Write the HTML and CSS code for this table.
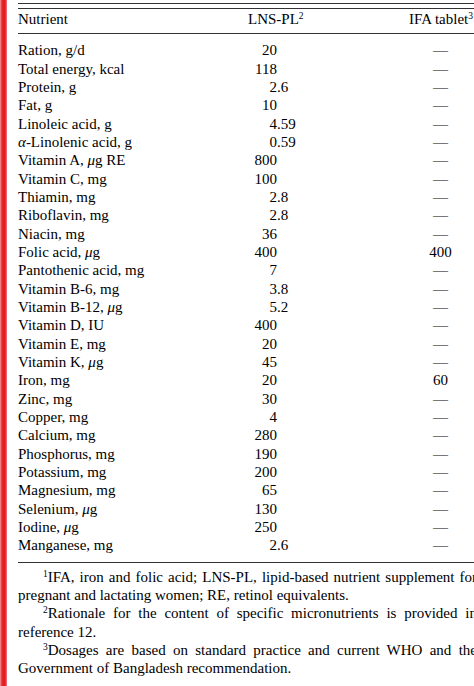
FILE: index.html
```html
<!DOCTYPE html>
<html lang="en">
<head>
<meta charset="utf-8">
<title>Nutrient composition</title>
<link rel="stylesheet" href="styles.css">
</head>
<body>
<div class="page">
  <div class="bar"></div>
  <div class="content">
    <div class="double-rule"></div>
    <div class="row head">
      <div class="name">Nutrient</div>
      <div class="lns">LNS-PL<sup>2</sup></div>
      <div class="ifa-head">IFA tablet<sup>3</sup></div>
    </div>
    <div class="body">
      <div class="row"><div class="name">Ration, g/d</div><div class="int">20</div><div class="frac"></div><div class="ifa">—</div></div>
      <div class="row"><div class="name">Total energy, kcal</div><div class="int">118</div><div class="frac"></div><div class="ifa">—</div></div>
      <div class="row"><div class="name">Protein, g</div><div class="int">2</div><div class="frac">.6</div><div class="ifa">—</div></div>
      <div class="row"><div class="name">Fat, g</div><div class="int">10</div><div class="frac"></div><div class="ifa">—</div></div>
      <div class="row"><div class="name">Linoleic acid, g</div><div class="int">4</div><div class="frac">.59</div><div class="ifa">—</div></div>
      <div class="row"><div class="name"><i>α</i>-Linolenic acid, g</div><div class="int">0</div><div class="frac">.59</div><div class="ifa">—</div></div>
      <div class="row"><div class="name">Vitamin A, <i>μ</i>g RE</div><div class="int">800</div><div class="frac"></div><div class="ifa">—</div></div>
      <div class="row"><div class="name">Vitamin C, mg</div><div class="int">100</div><div class="frac"></div><div class="ifa">—</div></div>
      <div class="row"><div class="name">Thiamin, mg</div><div class="int">2</div><div class="frac">.8</div><div class="ifa">—</div></div>
      <div class="row"><div class="name">Riboflavin, mg</div><div class="int">2</div><div class="frac">.8</div><div class="ifa">—</div></div>
      <div class="row"><div class="name">Niacin, mg</div><div class="int">36</div><div class="frac"></div><div class="ifa">—</div></div>
      <div class="row"><div class="name">Folic acid, <i>μ</i>g</div><div class="int">400</div><div class="frac"></div><div class="ifa">400</div></div>
      <div class="row"><div class="name">Pantothenic acid, mg</div><div class="int">7</div><div class="frac"></div><div class="ifa">—</div></div>
      <div class="row"><div class="name">Vitamin B-6, mg</div><div class="int">3</div><div class="frac">.8</div><div class="ifa">—</div></div>
      <div class="row"><div class="name">Vitamin B-12, <i>μ</i>g</div><div class="int">5</div><div class="frac">.2</div><div class="ifa">—</div></div>
      <div class="row"><div class="name">Vitamin D, IU</div><div class="int">400</div><div class="frac"></div><div class="ifa">—</div></div>
      <div class="row"><div class="name">Vitamin E, mg</div><div class="int">20</div><div class="frac"></div><div class="ifa">—</div></div>
      <div class="row"><div class="name">Vitamin K, <i>μ</i>g</div><div class="int">45</div><div class="frac"></div><div class="ifa">—</div></div>
      <div class="row"><div class="name">Iron, mg</div><div class="int">20</div><div class="frac"></div><div class="ifa">60</div></div>
      <div class="row"><div class="name">Zinc, mg</div><div class="int">30</div><div class="frac"></div><div class="ifa">—</div></div>
      <div class="row"><div class="name">Copper, mg</div><div class="int">4</div><div class="frac"></div><div class="ifa">—</div></div>
      <div class="row"><div class="name">Calcium, mg</div><div class="int">280</div><div class="frac"></div><div class="ifa">—</div></div>
      <div class="row"><div class="name">Phosphorus, mg</div><div class="int">190</div><div class="frac"></div><div class="ifa">—</div></div>
      <div class="row"><div class="name">Potassium, mg</div><div class="int">200</div><div class="frac"></div><div class="ifa">—</div></div>
      <div class="row"><div class="name">Magnesium, mg</div><div class="int">65</div><div class="frac"></div><div class="ifa">—</div></div>
      <div class="row"><div class="name">Selenium, <i>μ</i>g</div><div class="int">130</div><div class="frac"></div><div class="ifa">—</div></div>
      <div class="row"><div class="name">Iodine, <i>μ</i>g</div><div class="int">250</div><div class="frac"></div><div class="ifa">—</div></div>
      <div class="row"><div class="name">Manganese, mg</div><div class="int">2</div><div class="frac">.6</div><div class="ifa">—</div></div>
    </div>
    <div class="notes">
      <p><sup>1</sup>IFA, iron and folic acid; LNS-PL, lipid-based nutrient supplement for pregnant and lactating women; RE, retinol equivalents.</p>
      <p><sup>2</sup>Rationale for the content of specific micronutrients is provided in reference 12.</p>
      <p><sup>3</sup>Dosages are based on standard practice and current WHO and the Government of Bangladesh recommendation.</p>
    </div>
  </div>
</div>
</body>
</html>
```

FILE: styles.css
```css
html, body {
  margin: 0;
  padding: 0;
  overflow: hidden;
  background: #ffffff;
}

.page {
  display: flex;
  min-height: 686px;
  font-family: "Liberation Serif", "Times New Roman", serif;
  font-size: 15px;
  line-height: 18.33px;
  color: #000000;
}

.bar {
  width: 7px;
  flex-shrink: 0;
  background: linear-gradient(to right, #f39a9c 0, #e5262c 2px, #e01a22 5px, #ee7a7e 7px);
}

.content {
  flex-shrink: 0;
  width: 459px;
  padding-left: 11px;
}

.double-rule {
  margin-top: 3px;
  height: 4px;
  border-top: 1px solid #333333;
  border-bottom: 1px solid #333333;
}

.row {
  display: grid;
  grid-template-columns: 219px 40px 127px 73px;
  white-space: nowrap;
}

.head {
  padding-top: 1px;
  padding-bottom: 5px;
  border-bottom: 1px solid #333333;
}

.lns {
  grid-column: 2 / 4;
  padding-left: 11px;
}

.ifa-head {
  text-align: right;
  padding-right: 4px;
}

sup {
  font-size: 9.5px;
  line-height: 0;
  vertical-align: 5px;
}

.body {
  padding-top: 7px;
  padding-bottom: 7px;
  border-bottom: 1px solid #333333;
}

.int {
  text-align: right;
}

.frac {
  text-align: left;
}

.ifa {
  text-align: center;
}

.notes {
  padding-top: 5px;
}

.notes p {
  margin: 0;
  text-align: justify;
  text-indent: 25px;
}
```
